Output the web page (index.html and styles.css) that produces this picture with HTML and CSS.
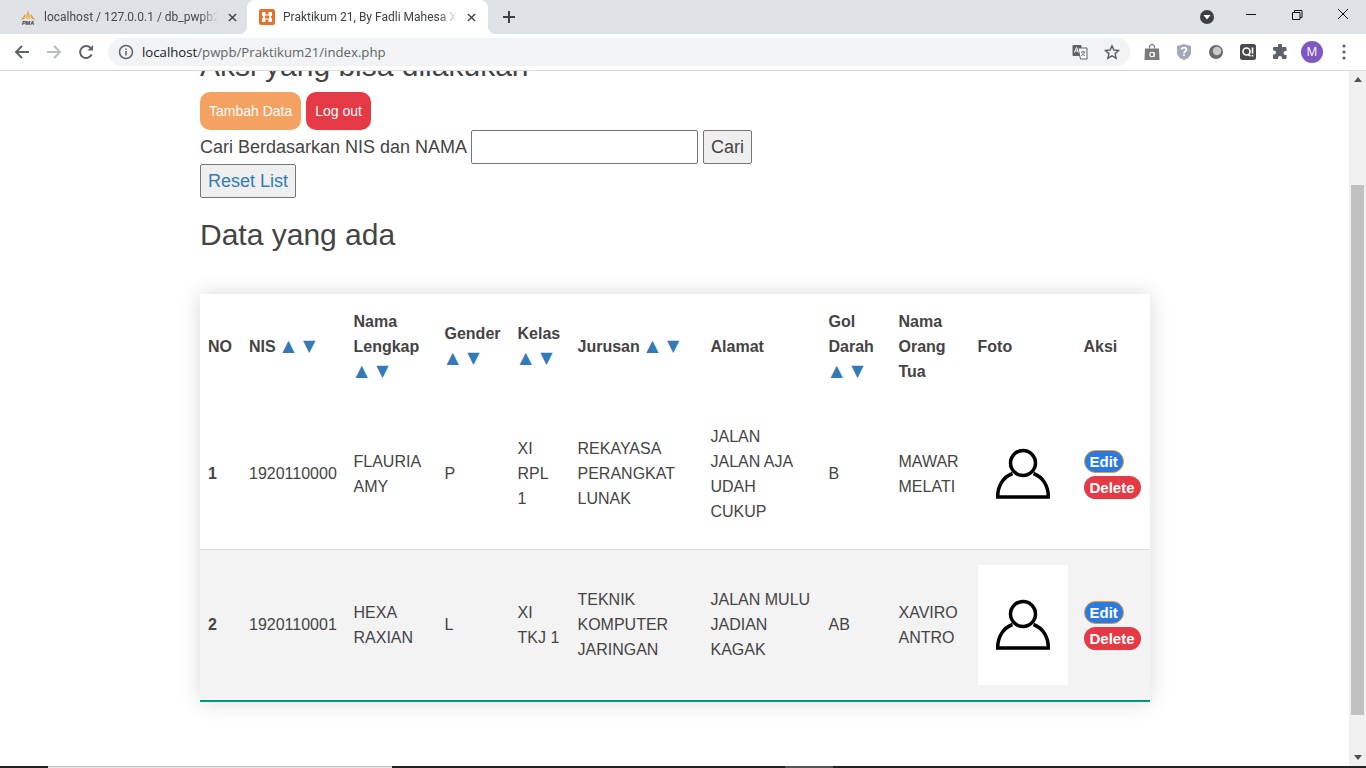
FILE: index.html
```html
<!DOCTYPE html>
<html lang="id">
<head>
<meta charset="utf-8">
<title>Praktikum 21</title>
<link rel="stylesheet" href="styles.css">
</head>
<body>
<div class="window">
  <header class="browser">
    <div class="tabstrip">
      <div class="tab">
        <svg class="favicon" viewBox="0 0 16 16"><path d="M1 11 5 5l1 3 2-7 2 7 1-3 4 6-3-1-1.500-3L9 10 8 6l-1 4-1.500-3L4 10z" fill="#f29b34"/><path d="M7 10 8 3l1 7z" fill="#f7c27a"/><text x="8" y="15.500" class="pma">PMA</text></svg>
        <span class="tab-title">localhost / 127.0.0.1 / db_pwpb21</span>
        <svg class="tab-close" viewBox="0 0 10 10"><path d="M1 1l8 8M9 1 1 9"/></svg>
      </div>
      <div class="tab tab-active">
        <svg class="favicon" viewBox="0 0 16 16"><rect width="16" height="16" rx="2" fill="#e8702a"/><path d="M3 3h3.500v2.500h3V3H13v3.500l-1.500 1.500 1.500 1.500V13H9.500v-2.500h-3V13H3V9.500L4.500 8 3 6.500z" fill="#fff"/><rect x="6" y="6.500" width="4" height="3" fill="#e8702a"/></svg>
        <span class="tab-title">Praktikum 21, By Fadli Mahesa XI RPL 1</span>
        <svg class="tab-close" viewBox="0 0 10 10"><path d="M1 1l8 8M9 1 1 9"/></svg>
      </div>
      <svg class="newtab" viewBox="0 0 12 12"><path d="M6 0v12M0 6h12"/></svg>
      <div class="winctl">
        <svg class="profile-dd" viewBox="0 0 14 14"><circle cx="7" cy="7" r="7" fill="#3c4043"/><path d="M3.500 5h7L7 9.500z" fill="#fff"/></svg>
        <svg class="wc" viewBox="0 0 46 30"><path d="M18 14.500h10"/></svg>
        <svg class="wc" viewBox="0 0 46 30"><path d="M18.500 12.500h7.500v7h-7.500zM20.500 12.500V10.500h7.500v7h-2"/></svg>
        <svg class="wc" viewBox="0 0 46 30"><path d="M18 9l10 10M28 9 18 19"/></svg>
      </div>
    </div>
    <div class="toolbar">
      <div class="slot"><svg class="ic" viewBox="0 0 16 16"><path class="stroke dark" d="M15 8H2M8 2 2 8l6 6"/></svg></div>
      <div class="slot"><svg class="ic" viewBox="0 0 16 16"><path class="stroke faint" d="M1 8h13M8 2l6 6-6 6"/></svg></div>
      <div class="slot"><svg class="ic" viewBox="0 0 16 16"><path class="stroke dark" d="M13.600 10.500A6 6 0 1 1 13 4.500"/><path class="fill-dark" d="M15 1v5.500H9.500z"/></svg></div>
      <div class="omnibox">
        <svg class="info" viewBox="0 0 16 16"><circle cx="8" cy="8" r="6.500" fill="none" stroke="#5f6368" stroke-width="1.500"/><path d="M7.250 7h1.500v4.500h-1.500zM7.250 4.500h1.500V6h-1.500z" fill="#5f6368"/></svg>
        <div class="url"><span class="host">localhost</span>/pwpb/Praktikum21/index.php</div>
        <div class="slot"><svg class="ic" viewBox="0 0 16 16"><rect x="0.500" y="1" width="9" height="11" rx="1" fill="#5f6368"/><path d="M6 4h9v11H8.500z" fill="#fff" stroke="#5f6368"/><path d="M2.500 8.500 4.500 3.500l2 5M3.300 7h2.500" fill="none" stroke="#fff"/><path d="M9 8h4.500M11.200 7v1M12.500 8c-.5 2-1.800 3-3.300 3.500M10 9.500c.5 1 1.500 1.700 3 2" fill="none" stroke="#5f6368" stroke-width=".9"/></svg></div>
        <div class="slot"><svg class="ic" viewBox="0 0 16 16"><path class="stroke dark thin" d="M8 1.800l1.900 4.200 4.600.5-3.400 3.100 1 4.600L8 11.900l-4.100 2.300 1-4.600L1.500 6.500 6.100 6z"/></svg></div>
      </div>
      <div class="slot"><svg class="ic" viewBox="0 0 16 16"><path d="M1 4.500h14L15.500 16H.5z" fill="#7b7b7b"/><path d="M5.500 4.500V3a2.500 2.500 0 0 1 5 0v1.500" fill="none" stroke="#7b7b7b" stroke-width="1.200"/><circle cx="8" cy="10.500" r="2.200" fill="none" stroke="#fff" stroke-width="1.100"/><path d="M10.200 8.200v4.700" stroke="#fff" stroke-width="1.100"/></svg></div>
      <div class="slot"><svg class="ic" viewBox="0 0 16 16"><path d="M8 0l7 2v6.500c0 3.500-3 6-7 7.500-4-1.500-7-4-7-7.500V2z" fill="#a4a9b8"/><path d="M5.600 5.500C5.800 3 10.400 3 10.400 5.600c0 1.900-2.400 1.900-2.400 3.700" fill="none" stroke="#fff" stroke-width="1.700"/><rect x="7.100" y="10.300" width="1.800" height="1.800" fill="#fff"/></svg></div>
      <div class="slot"><svg class="ic" viewBox="0 0 16 16"><circle cx="8" cy="8" r="7" fill="#6a6a6a"/><circle cx="9" cy="7" r="4.300" fill="#c9c9c9"/><path d="M6 4a4.300 4.300 0 0 1 7 2 4.300 4.300 0 0 0-7-2z" fill="#f2f2f2"/></svg></div>
      <div class="slot"><svg class="ic" viewBox="0 0 16 16"><rect width="16" height="16" rx="2.500" y="0" fill="#4a4a4a"/><circle cx="6.500" cy="7.500" r="3.500" fill="none" stroke="#fff" stroke-width="1.600"/><path d="M8 10.500l2.500 1.500" stroke="#fff" stroke-width="1.500"/><path d="M12.500 3.500v6M12.500 10.700v1.800" stroke="#fff" stroke-width="1.700"/></svg></div>
      <div class="slot"><svg class="ic" viewBox="0 0 16 16"><path class="fill-dark" d="M6 1a2 2 0 0 1 4 .5V3h3.500a1 1 0 0 1 1 1v3h-1a2 2 0 0 0 0 4h1v3a1 1 0 0 1-1 1H10v-1a2 2 0 0 0-4 0v1H2a1 1 0 0 1-1-1v-3.500h1a2 2 0 0 0 0-4H1V4a1 1 0 0 1 1-1h4z"/></svg></div>
      <div class="slot"><div class="avatar">M</div></div>
      <div class="slot"><svg class="kebab" viewBox="0 0 4 16"><circle cx="2" cy="2" r="1.600"/><circle cx="2" cy="8" r="1.600"/><circle cx="2" cy="14" r="1.600"/></svg></div>
    </div>
  </header>

  <div class="viewport">
    <main class="page">
      <h2 class="title title-clipped">Aksi yang bisa dilakukan</h2>
      <div class="actions">
        <a class="pill pill-orange">Tambah Data</a>
        <a class="pill pill-red">Log out</a>
      </div>
      <form class="search">
        <label class="search-label">Cari Berdasarkan NIS dan NAMA</label>
        <input class="search-input" type="text">
        <button class="plain-btn" type="button">Cari</button>
      </form>
      <div class="reset-row"><button class="plain-btn link-btn" type="button">Reset List</button></div>
      <h2 class="title title-data">Data yang ada</h2>

      <table class="data">
        <colgroup>
          <col class="c-no"><col class="c-nis"><col class="c-nama"><col class="c-gender"><col class="c-kelas"><col class="c-jurusan"><col class="c-alamat"><col class="c-gol"><col class="c-ortu"><col class="c-foto"><col class="c-aksi">
        </colgroup>
        <thead>
          <tr>
            <th>NO</th>
            <th>NIS <a class="sort">▲</a> <a class="sort">▼</a></th>
            <th>Nama Lengkap <a class="sort">▲</a> <a class="sort">▼</a></th>
            <th class="two-line">Gender <a class="sort">▲</a> <a class="sort">▼</a></th>
            <th class="two-line">Kelas <a class="sort">▲</a> <a class="sort">▼</a></th>
            <th>Jurusan <a class="sort">▲</a> <a class="sort">▼</a></th>
            <th>Alamat</th>
            <th>Gol Darah <a class="sort">▲</a> <a class="sort">▼</a></th>
            <th>Nama Orang Tua</th>
            <th>Foto</th>
            <th>Aksi</th>
          </tr>
        </thead>
        <tbody>
          <tr>
            <td class="num">1</td>
            <td>1920110000</td>
            <td>FLAURIA AMY</td>
            <td>P</td>
            <td>XI<br>RPL<br>1</td>
            <td>REKAYASA PERANGKAT LUNAK</td>
            <td>JALAN JALAN AJA UDAH CUKUP</td>
            <td>B</td>
            <td>MAWAR MELATI</td>
            <td class="foto"><svg class="person" viewBox="0 0 90 120"><rect width="90" height="120" fill="#fff"/><circle cx="45" cy="49" r="12.500"/><path d="M34.500 59.500C25 63 19.700 72 19.700 83H70.300C70.300 72 65 63 55.500 59.500"/></svg></td>
            <td class="aksi"><a class="chip chip-edit">Edit</a><a class="chip chip-del">Delete</a></td>
          </tr>
          <tr>
            <td class="num">2</td>
            <td>1920110001</td>
            <td>HEXA RAXIAN</td>
            <td>L</td>
            <td>XI TKJ 1</td>
            <td>TEKNIK KOMPUTER JARINGAN</td>
            <td>JALAN MULU JADIAN KAGAK</td>
            <td>AB</td>
            <td>XAVIRO ANTRO</td>
            <td class="foto"><svg class="person" viewBox="0 0 90 120"><rect width="90" height="120" fill="#fff"/><circle cx="45" cy="49" r="12.500"/><path d="M34.500 59.500C25 63 19.700 72 19.700 83H70.300C70.300 72 65 63 55.500 59.500"/></svg></td>
            <td class="aksi"><a class="chip chip-edit">Edit</a><a class="chip chip-del">Delete</a></td>
          </tr>
        </tbody>
      </table>
    </main>
    <aside class="scrollbar">
      <div class="sb-btn"><span class="arrow-up"></span></div>
      <div class="sb-thumb"></div>
      <div class="sb-rest"></div>
      <div class="sb-btn"><span class="arrow-down"></span></div>
    </aside>
  </div>

  <footer class="strip">
    <div class="seg seg-a"></div>
    <div class="seg seg-b"></div>
    <div class="seg seg-c"></div>
    <div class="seg seg-d"></div>
    <div class="seg seg-e"></div>
  </footer>
</div>
</body>
</html>
```

FILE: styles.css
```css
* { box-sizing: border-box; }
html, body { margin: 0; padding: 0; height: 100%; overflow: hidden; }
body { font-family: "Liberation Sans", Arial, sans-serif; font-size: 16px; color: #444; background: #fff; }
.window { display: flex; flex-direction: column; height: 768px; width: 1366px; }

/* Browser chrome */
.browser { flex: none; height: 71px; display: flex; flex-direction: column; border-bottom: 1px solid #d9dadc; }
.tabstrip { height: 34px; background: #dee1e6; display: flex; align-items: stretch; padding-left: 8px; font-family: Roboto, "Open Sans", sans-serif; }
.tab { width: 239px; display: flex; align-items: center; padding: 0 7px 0 12px; position: relative; font-size: 12px; color: #45484d; }
.tab-active { width: 241px; padding-right: 9px; background: #fff; border-radius: 8px 8px 0 0; color: #3c4043; }
.tab-active::before, .tab-active::after { content: ""; position: absolute; bottom: 0; width: 8px; height: 8px; }
.tab-active::before { left: -8px; background: radial-gradient(circle at 0 0, #dee1e6 8px, #fff 8.500px); }
.tab-active::after { right: -8px; background: radial-gradient(circle at 100% 0, #dee1e6 8px, #fff 8.500px); }
.favicon { width: 16px; height: 16px; flex: none; margin-right: 8px; }
.pma { font: italic bold 5.500px "Liberation Sans", sans-serif; fill: #333; text-anchor: middle; }
.tab-title { flex: 1; min-width: 0; white-space: nowrap; overflow: hidden; -webkit-mask-image: linear-gradient(to left, transparent 0, #000 18px); mask-image: linear-gradient(to left, transparent 0, #000 18px); }
.tab-close { width: 9px; height: 9px; flex: none; margin: 0 3px 0 10px; fill: none; stroke: #3c4043; stroke-width: 1.500; }
.newtab { width: 12px; height: 12px; align-self: center; margin-left: 15px; fill: none; stroke: #3c4043; stroke-width: 2; flex: none; }
.winctl { margin-left: auto; display: flex; align-items: flex-start; }
.profile-dd { width: 14px; height: 14px; margin: 10px 14px 0 0; }
.wc { width: 46px; height: 30px; fill: none; stroke: #111; stroke-width: 1; flex: none; }

.toolbar { height: 36px; display: flex; align-items: center; padding: 0 6px; background: #fff; }
.slot { width: 32px; height: 28px; display: flex; align-items: center; justify-content: center; flex: none; }
.ic { width: 16px; height: 16px; }
.stroke { fill: none; stroke-width: 2; }
.dark { stroke: #5f6368; }
.faint { stroke: #b9bcc0; }
.thin { stroke-width: 1.500; }
.fill-dark { fill: #5f6368; }
.omnibox { flex: 1; height: 28px; margin: 0 6px; background: #f1f3f4; border-radius: 14px; display: flex; align-items: center; padding: 0 2px 0 10px; }
.info { width: 16px; height: 16px; flex: none; margin-right: 8px; }
.url { flex: 1; font-family: "Open Sans", "Noto Sans", sans-serif; font-size: 13.200px; color: #5f6368; white-space: nowrap; }
.host { color: #202124; }
.avatar { width: 22px; height: 22px; border-radius: 50%; background: #7e57c2; color: #fff; font: 12px/22px "Open Sans", sans-serif; text-align: center; }
.kebab { width: 4px; height: 16px; fill: #5f6368; }

/* Viewport */
.viewport { flex: 1; min-height: 0; display: flex; overflow: hidden; }
.page { flex: 1; min-width: 0; padding-left: 200px; overflow: hidden; }
.title { margin: 0; font-size: 30px; font-weight: 500; line-height: 33px; color: #444; }
.title-clipped { margin: -22px 0 10px; }
.title-data { margin: 20px 0 0; }
.actions { display: flex; gap: 5px; height: 38px; }
.pill { display: block; height: 38px; line-height: 38px; padding: 0 9px; border-radius: 10px; color: #fff; font-size: 14px; }
.pill-orange { background: #f4a261; }
.pill-red { background: #e63946; }
.search { display: flex; align-items: center; height: 34px; font-size: 18px; margin: 0; }
.search-label { margin-right: 4px; }
.search-input { width: 227px; height: 34px; border: 1px solid #767676; border-radius: 2px; background: #fff; margin-right: 5px; padding: 0; }
.plain-btn { height: 34px; padding: 0 7px; border: 1px solid #767676; border-radius: 2px; background: #efefef; color: #444; font: 18px "Liberation Sans", Arial, sans-serif; }
.reset-row { height: 34px; }
.link-btn { color: #337ab7; }

/* Table */
.data { width: 950px; margin-top: 43px; table-layout: fixed; border-collapse: collapse; background: #fff; box-shadow: 0 0 20px rgba(0, 0, 0, 0.15); border-bottom: 2px solid #009879; line-height: 25px; }
.c-no { width: 41px; } .c-nis { width: 104.500px; } .c-nama { width: 91px; } .c-gender { width: 73px; }
.c-kelas { width: 60px; } .c-jurusan { width: 133px; } .c-alamat { width: 118px; } .c-gol { width: 70px; }
.c-ortu { width: 79px; } .c-foto { width: 106px; } .c-aksi { width: 74.500px; }
.data th, .data td { padding: 15px 8px; vertical-align: middle; text-align: left; }
.data td { padding-bottom: 16px; }
.data td.foto, .data td.aksi { padding-bottom: 15px; }
.data th { font-weight: bold; }
.data th.two-line { padding-bottom: 16px; }
.data tbody tr { border-bottom: 1px solid #dddddd; height: 150px; }
.data tbody tr:nth-child(2) { background: #f3f3f3; border-bottom: 0; }
.num { font-weight: bold; }
.sort { margin: 0 2px; line-height: 0; vertical-align: 1px; color: #337ab7; font-family: "DejaVu Sans", sans-serif; font-weight: normal; }
.foto { line-height: 0; }
.person { width: 90px; height: 120px; display: block; fill: none; stroke: #000; stroke-width: 3.500; }
.person rect { stroke: none; }
.aksi { white-space: nowrap; }
.chip { display: block; width: fit-content; height: 23px; line-height: 23px; padding: 0 6px; border-radius: 12px; color: #fff; font-weight: bold; font-size: 15px; }
.chip-edit { background: #2a7ae2; border: 1px solid #e69a3a; padding: 0 5px; line-height: 21px; margin-bottom: 3px; }
.chip-del { background: #e63946; }

/* Scrollbar */
.scrollbar { flex: none; width: 17px; background: #f1f1f1; display: flex; flex-direction: column; align-items: center; }
.sb-btn { height: 17px; display: flex; align-items: center; justify-content: center; flex: none; }
.arrow-up { width: 0; height: 0; border: 4px solid transparent; border-top: 0; border-bottom: 5px solid #505050; }
.arrow-down { width: 0; height: 0; border: 4px solid transparent; border-bottom: 0; border-top: 5px solid #505050; }
.sb-thumb { width: 13px; height: 530px; margin-top: 97px; background: #c1c1c1; flex: none; }
.sb-rest { flex: 1; }

/* Bottom strip */
.strip { flex: none; height: 2px; display: flex; background: #222; }
.seg { height: 2px; }
.seg-a { width: 48px; background: #222; }
.seg-b { width: 344px; background: #c0c0c0; border-bottom: 1px solid #e6e6e6; }
.seg-c { width: 393px; background: #222; }
.seg-d { width: 48px; background: #555; }
.seg-e { flex: 1; background: #222; }
```
